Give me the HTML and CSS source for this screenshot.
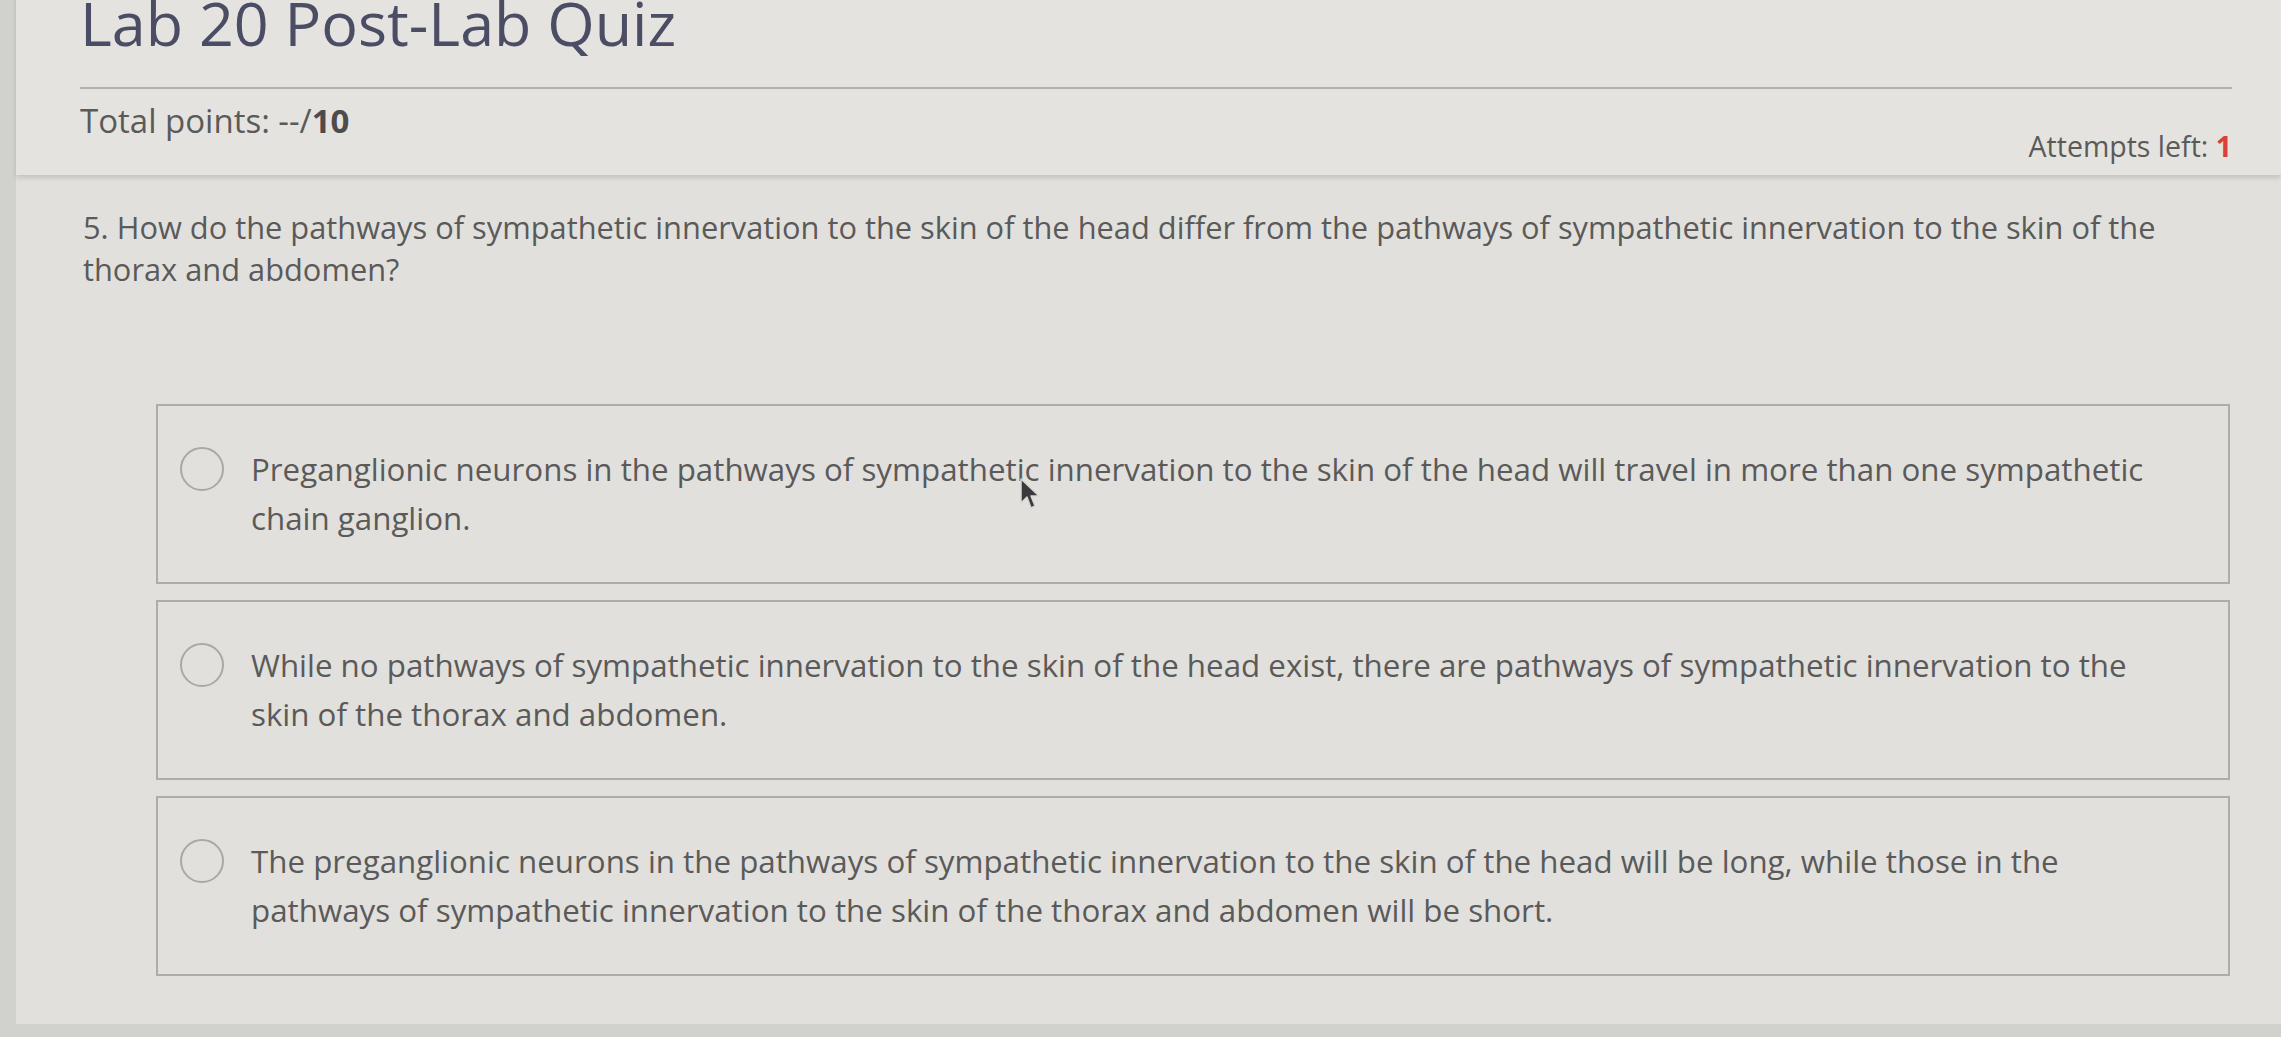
FILE: index.html
```html
<!DOCTYPE html>
<html lang="en">
  <head>
    <meta charset="UTF-8" />
    <meta name="viewport" content="width=device-width, initial-scale=1.0" />
    <title>Lab 20 Post-Lab Quiz</title>
    <link rel="stylesheet" href="styles.css">
  </head>
  <body>
    <div class="page">
      <header class="quiz-head">
        <h1>Lab 20 Post-Lab Quiz</h1>
        <div class="score-row">
          <span class="points">Total points: --/<b>10</b></span>
          <span class="attempts">Attempts left: <b>1</b></span>
        </div>
      </header>

      <main class="question">
        <p class="prompt">5. How do the pathways of sympathetic innervation to the skin of the head differ from the pathways of sympathetic innervation to the skin of the thorax and abdomen?</p>
        <ul class="choices">
          <li>
            <label class="choice">
              <input type="radio" name="q5" value="a" />
              <span class="radio"></span>
              <span class="choice-text">Preganglionic neurons in the pathways of sympathetic innervation to the skin of the head will travel in more than one sympathetic chain ganglion.</span>
            </label>
          </li>
          <li>
            <label class="choice">
              <input type="radio" name="q5" value="b" />
              <span class="radio"></span>
              <span class="choice-text">While no pathways of sympathetic innervation to the skin of the head exist, there are pathways of sympathetic innervation to the skin of the thorax and abdomen.</span>
            </label>
          </li>
          <li>
            <label class="choice">
              <input type="radio" name="q5" value="c" />
              <span class="radio"></span>
              <span class="choice-text">The preganglionic neurons in the pathways of sympathetic innervation to the skin of the head will be long, while those in the pathways of sympathetic innervation to the skin of the thorax and abdomen will be short.</span>
            </label>
          </li>
        </ul>
      </main>
    </div>

    <!-- mouse pointer resting over the first answer -->
    <svg class="pointer" width="24" height="34" viewBox="0 0 24 34">
      <path d="M2 2 L2 26 L8 20 L12 31 L16 29 L12 19 L20 19 Z" fill="#3a3a3c" stroke="#d8d6d2" stroke-width="1.5" stroke-linejoin="round" />
    </svg>
  </body>
</html>
```

FILE: styles.css
```css
* {
  box-sizing: border-box;
}
body {
  margin: 0;
  background-color: #d1d2ce;
  font-family: "Open Sans", "Liberation Sans", sans-serif;
  color: #5a5a5a;
  overflow: hidden;
}
.page {
  margin-left: 16px;
  min-height: 100vh;
  background-color: #e2e0dc;
}

/* top panel with title and score */
.quiz-head {
  padding: 0 49px 10px 64px;
  background-color: #e5e3df;
  box-shadow: 0 3px 5px rgba(0, 0, 0, 0.13);
}
.quiz-head h1 {
  margin: -13px 0 0;
  padding-bottom: 28px;
  border-bottom: 2px solid #b3b1ad;
  font-size: 61px;
  font-weight: 400;
  line-height: 72px;
  color: #4a4d63;
}
.score-row {
  display: flex;
  justify-content: space-between;
  align-items: flex-start;
  padding-top: 10px;
}
.points {
  font-size: 33px;
  line-height: 44px;
}
.points b {
  color: #4c4c4c;
}
.attempts {
  margin-top: 28px;
  font-size: 28.5px;
  line-height: 38px;
}
.attempts b {
  color: #d9403e;
}

/* question and answers */
.question {
  padding: 31px 51px 0 67px;
}
.prompt {
  margin: 0;
  font-size: 30.8px;
  line-height: 42px;
}
.choices {
  list-style: none;
  margin: 114px 0 0;
  padding: 0 0 0 73px;
  display: flex;
  flex-direction: column;
  gap: 16px;
}
.choice {
  display: flex;
  align-items: flex-start;
  gap: 27px;
  padding: 39px 64px 39px 22px;
  border: 2px solid #adaca8;
  font-size: 31.3px;
  line-height: 49px;
  cursor: pointer;
}
.choice input {
  display: none;
}
.radio {
  flex: none;
  width: 44px;
  height: 44px;
  margin-top: 2px;
  border: 2px solid #a9a8a5;
  border-radius: 50%;
}

.pointer {
  position: absolute;
  left: 1019px;
  top: 477px;
}
```
